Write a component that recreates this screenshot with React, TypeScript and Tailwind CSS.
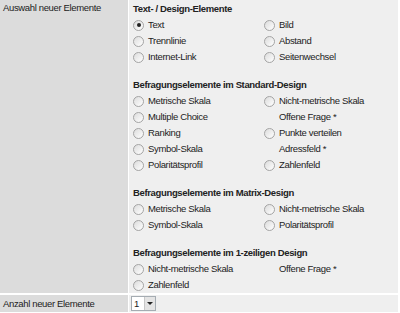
import React from "react";

type Item = { label: string; radio?: boolean; checked?: boolean };

const sections: { title: string; items: Item[] }[] = [
	{
		title: "Text- / Design-Elemente",
		items: [
			{ label: "Text", radio: true, checked: true },
			{ label: "Bild", radio: true },
			{ label: "Trennlinie", radio: true },
			{ label: "Abstand", radio: true },
			{ label: "Internet-Link", radio: true },
			{ label: "Seitenwechsel", radio: true },
		],
	},
	{
		title: "Befragungselemente im Standard-Design",
		items: [
			{ label: "Metrische Skala", radio: true },
			{ label: "Nicht-metrische Skala", radio: true },
			{ label: "Multiple Choice", radio: true },
			{ label: "Offene Frage *" },
			{ label: "Ranking", radio: true },
			{ label: "Punkte verteilen", radio: true },
			{ label: "Symbol-Skala", radio: true },
			{ label: "Adressfeld *" },
			{ label: "Polaritätsprofil", radio: true },
			{ label: "Zahlenfeld", radio: true },
		],
	},
	{
		title: "Befragungselemente im Matrix-Design",
		items: [
			{ label: "Metrische Skala", radio: true },
			{ label: "Nicht-metrische Skala", radio: true },
			{ label: "Symbol-Skala", radio: true },
			{ label: "Polaritätsprofil", radio: true },
		],
	},
	{
		title: "Befragungselemente im 1-zeiligen Design",
		items: [
			{ label: "Nicht-metrische Skala", radio: true },
			{ label: "Offene Frage *" },
			{ label: "Zahlenfeld", radio: true },
		],
	},
];

function Radio({ checked }: { checked?: boolean }) {
	return (
		<span className="flex items-center justify-center w-[11px] h-[11px] rounded-full border border-[#a4a4a4] bg-gradient-to-br from-[#dcdcdc] to-white shrink-0">
			{checked && <span className="w-[4px] h-[4px] rounded-full bg-[#222]" />}
		</span>
	);
}

function Option({ item }: { item: Item }) {
	return (
		<div className="flex items-center h-[16px] gap-[4px]">
			{item.radio ? <Radio checked={item.checked} /> : <span className="w-[11px] shrink-0" />}
			<span>{item.label}</span>
		</div>
	);
}

export default function App() {
	return (
		<div
			className="w-[400px] h-[313px] bg-white text-[#222] text-[9.5px] tracking-[-0.35px] leading-[16px]"
			style={{ fontFamily: '"Liberation Sans", Arial, sans-serif' }}
		>
			<div className="grid grid-cols-[128px_269px] gap-x-[1px] gap-y-[2px]">
				<div className="bg-[#dcdcdc] px-[3px] pt-[1px] leading-[14px]">Auswahl neuer Elemente</div>
				<div className="bg-[#efefef] pl-[4px] pt-[1px] pb-[0px] flex flex-col gap-[12px]">
					{sections.map((s) => (
						<div key={s.title}>
							<div className="font-bold h-[16px]">{s.title}</div>
							<div className="grid grid-cols-[131px_1fr]">
								{s.items.map((it, i) => (
									<Option key={i} item={it} />
								))}
							</div>
						</div>
					))}
				</div>
				<div className="bg-[#dcdcdc] px-[3px] h-[17px] flex items-center">Anzahl neuer Elemente</div>
				<div className="bg-[#efefef] h-[17px] flex items-center pl-[2px]">
					<div className="flex items-center h-[15px] w-[25px] bg-white border border-[#a5acb2]">
						<span className="flex-1 pl-[2px] leading-[13px]">1</span>
						<span className="flex items-center justify-center w-[11px] h-[13px] bg-[#e4e4e4] border-l border-[#c8c8c8]">
							<span className="w-0 h-0 border-l-[3px] border-r-[3px] border-t-[3px] border-l-transparent border-r-transparent border-t-[#222]" />
						</span>
					</div>
				</div>
			</div>
		</div>
	);
}
